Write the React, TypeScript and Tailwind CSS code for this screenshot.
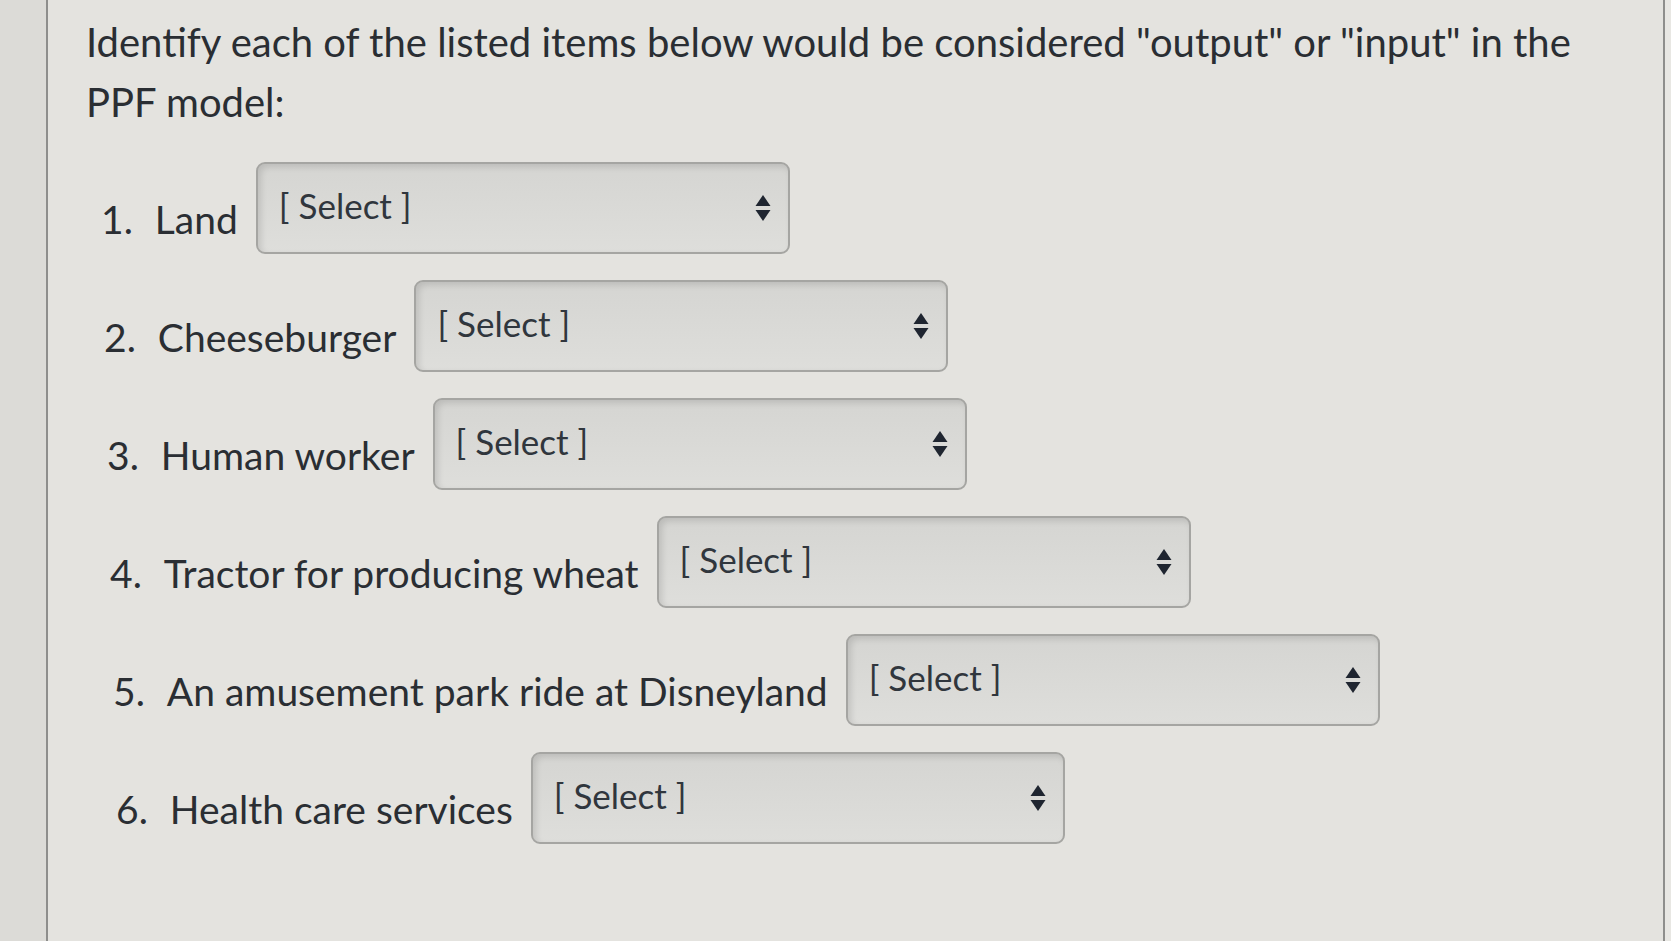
import React from 'react';

// indent grows a little per row, as in the reference
const items = [
  { label: 'Land', indent: 'pl-[15px]' },
  { label: 'Cheeseburger', indent: 'pl-[18px]' },
  { label: 'Human worker', indent: 'pl-[21px]' },
  { label: 'Tractor for producing wheat', indent: 'pl-[24px]' },
  { label: 'An amusement park ride at Disneyland', indent: 'pl-[27px]' },
  { label: 'Health care services', indent: 'pl-[30px]' },
];

const Arrows: React.FC = () => (
  <svg width="16" height="28" viewBox="0 0 16 28" className="shrink-0">
    <path d="M8 1 L15.5 12 L0.5 12 Z" fill="#1f2530" />
    <path d="M0.5 16 L15.5 16 L8 27 Z" fill="#1f2530" />
  </svg>
);

const SelectBox: React.FC = () => (
  <div className="ml-[18px] w-[534px] h-[92px] shrink-0 flex items-center justify-between pl-[21px] pr-[17px] rounded-[9px] border-2 border-[#a5a5a2] bg-gradient-to-b from-[#d5d5d2] to-[#dededb] shadow-[inset_3px_3px_6px_rgba(0,0,0,0.12)]">
    <span className="text-[35px] leading-none text-[#30363d] -mt-[6px]">[ Select ]</span>
    <Arrows />
  </div>
);

export default function App() {
  return (
    <div className="min-h-screen w-full flex bg-[#e4e3df] text-[#2a2e33]" style={{ fontFamily: 'Lato, "Open Sans", sans-serif' }}>
      {/* left rail */}
      <div className="w-[48px] shrink-0 bg-[#dcdbd7] border-r-2 border-[#8e8e8c]" />

      <div className="flex-1 pl-[38px] pt-[12px]">
        <p className="text-[40px] leading-[60px] max-w-[1500px]">
          Identify each of the listed items below would be considered "output" or "input" in the PPF model:
        </p>

        <ol className="mt-[30px] flex flex-col gap-[26px]">
          {items.map((item, i) => (
            <li key={item.label} className="flex items-start">
              <span className={`${item.indent} pt-[34px] text-[39px] leading-[46px] shrink-0`}>{i + 1}.</span>
              <span className="pl-[22px] pt-[34px] text-[39px] leading-[46px] whitespace-nowrap">{item.label}</span>
              <SelectBox />
            </li>
          ))}
        </ol>
      </div>

      {/* right rail */}
      <div className="w-[8px] shrink-0 bg-[#e8e7e3] border-l-2 border-[#8e8e8c]" />
    </div>
  );
}
